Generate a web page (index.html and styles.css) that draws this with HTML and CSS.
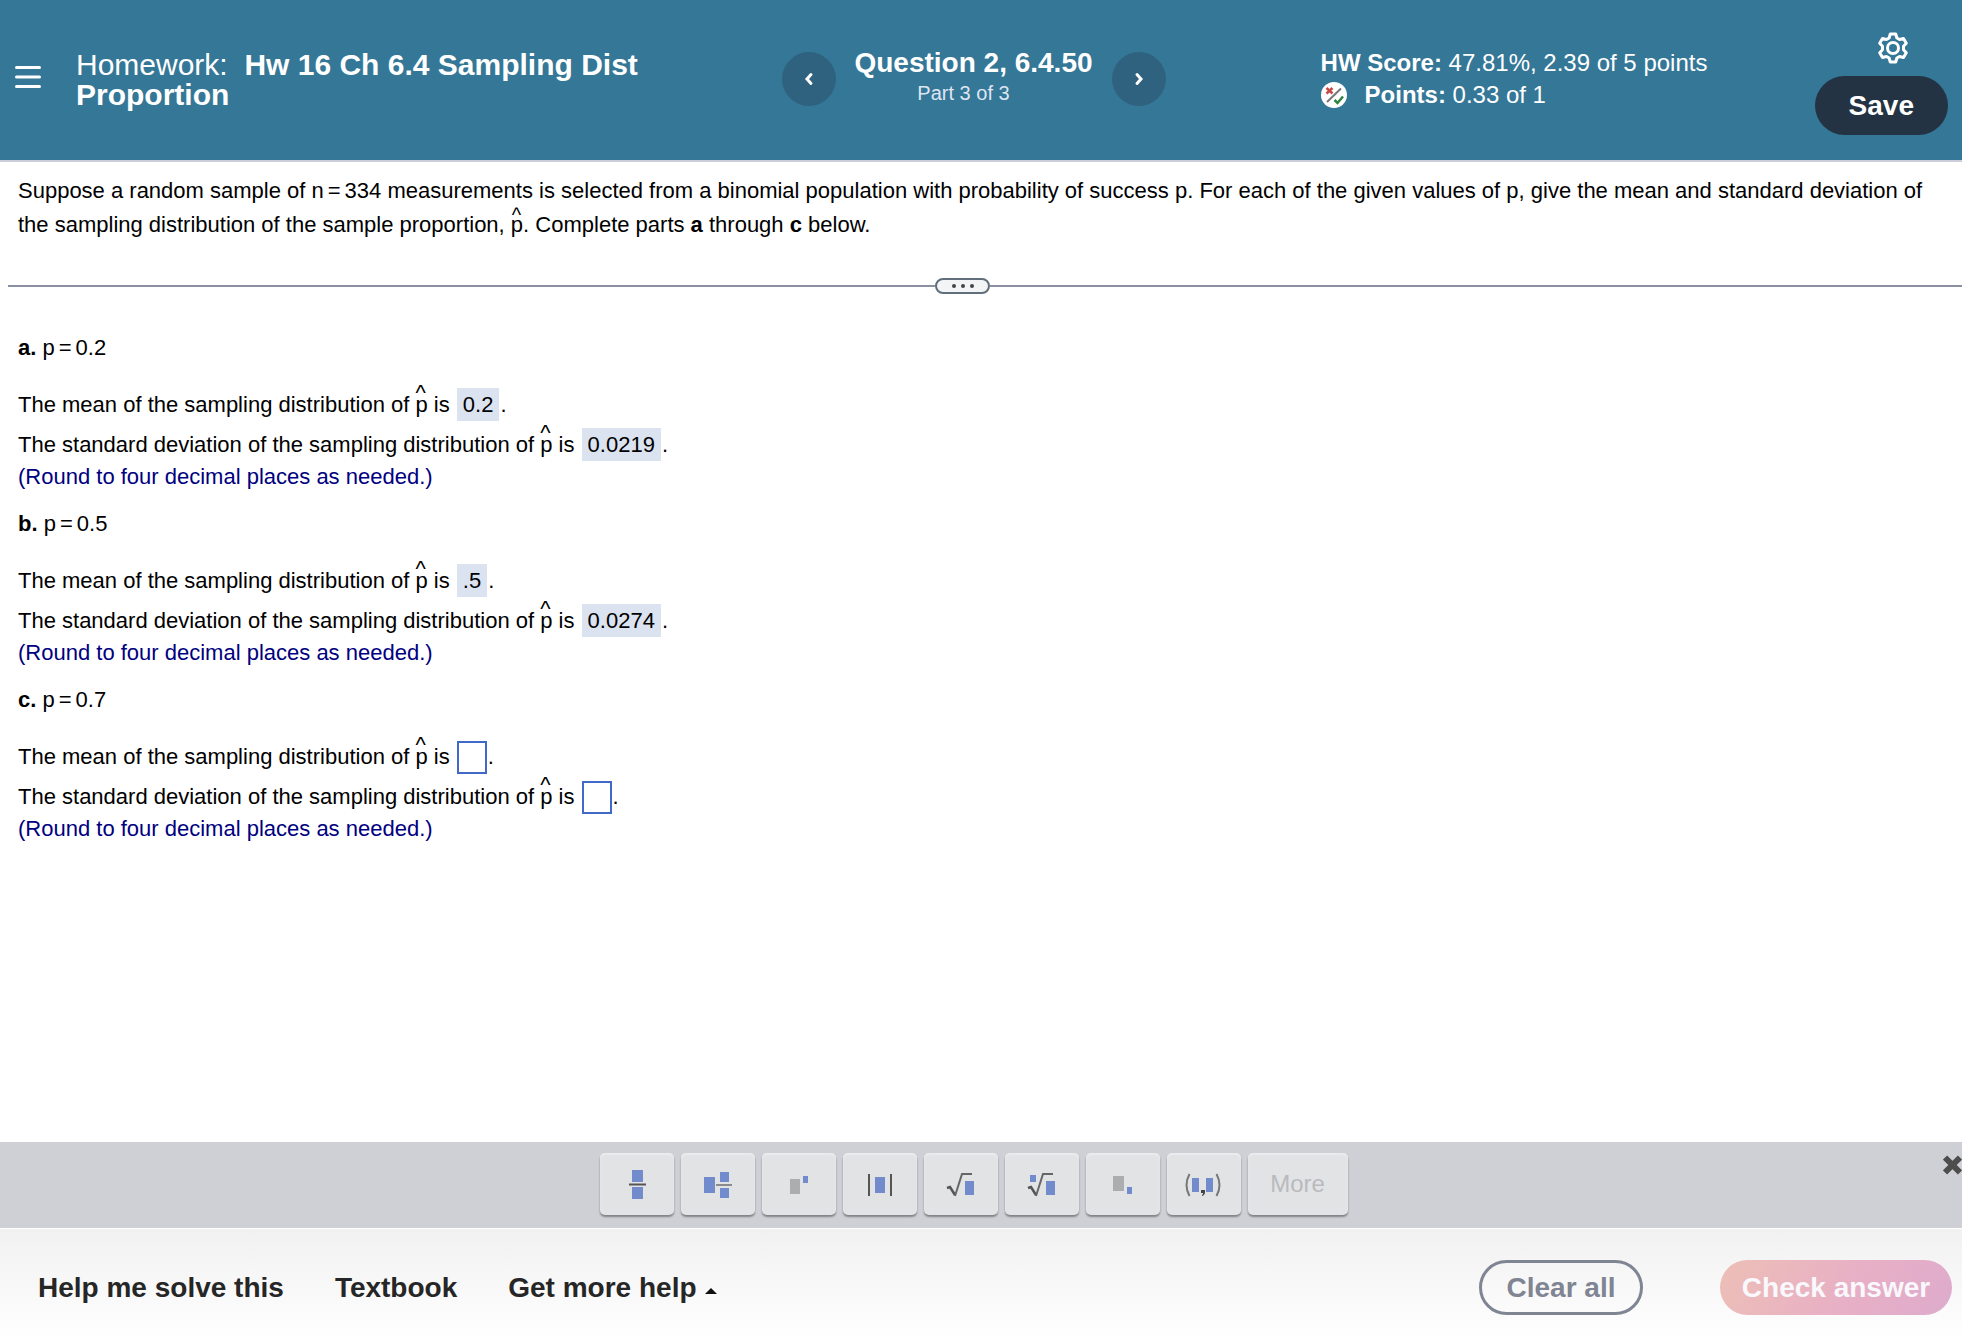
FILE: index.html
```html
<!DOCTYPE html>
<html lang="en">
<head>
<meta charset="utf-8">
<title>Homework: Hw 16 Ch 6.4 Sampling Dist Proportion</title>
<link rel="stylesheet" href="styles.css">
</head>
<body>
<header class="topbar">
  <div class="topbar-left">
    <button class="menu" aria-label="Menu">
      <svg width="26" height="24" viewBox="0 0 26 24"><path d="M1.500 2.500h23M1.500 12h23M1.500 21.500h23" stroke="#fff" stroke-width="3" stroke-linecap="round"/></svg>
    </button>
    <h1 class="title"><span class="title-kind">Homework:&nbsp;</span> Hw 16 Ch 6.4 Sampling Dist Proportion</h1>
  </div>
  <nav class="stepper" aria-label="Question">
    <button class="step" aria-label="Previous question">
      <svg width="10" height="14" viewBox="0 0 10 14"><path d="M7 2.500L3 7l4 4.500" fill="none" stroke="#fff" stroke-width="3" stroke-linecap="round"/></svg>
    </button>
    <div class="step-text">
      <h2 class="question">Question 2, 6.4.50</h2>
      <p class="part">Part 3 of 3</p>
    </div>
    <button class="step" aria-label="Next question">
      <svg width="10" height="14" viewBox="0 0 10 14"><path d="M3 2.500L7 7l-4 4.500" fill="none" stroke="#fff" stroke-width="3" stroke-linecap="round"/></svg>
    </button>
  </nav>
  <div class="topbar-right">
    <div class="scores">
      <p class="score"><b>HW Score:</b> 47.81%, 2.39 of 5 points</p>
      <p class="score points">
        <svg width="26" height="26" viewBox="0 0 26 26"><circle cx="13" cy="13" r="13" fill="#fff"/><path d="M6 20L20 6.500" stroke="#777" stroke-width="2"/><path d="M5.500 6l6 5.500M11.500 6l-6 5.500" stroke="#c94848" stroke-width="2.500"/><path d="M13.500 18l3 3 5.500-6.500" fill="none" stroke="#2e8540" stroke-width="2.500"/></svg>
        <span><b>Points:</b> 0.33 of 1</span>
      </p>
    </div>
    <div class="actions">
      <button class="gear" aria-label="Settings">
        <svg width="32" height="32" viewBox="0 0 32 32" fill="none" stroke="#fff" stroke-width="3" stroke-linejoin="round"><path d="M13.300 2h5.400l1.200 4 2.600 1.500 4-1 2.800 4.800-2.800 2.900v3.600l2.800 2.900-2.800 4.800-4-1-2.600 1.500-1.200 4h-5.400l-1.200-4-2.600-1.500-4 1-2.800-4.800 2.800-2.900v-3.600l-2.800-2.900 2.800-4.800 4 1 2.600-1.500z"/><circle cx="16" cy="16" r="5.500"/></svg>
      </button>
      <button class="save">Save</button>
    </div>
  </div>
</header>

<main class="content">
  <p class="intro">Suppose a random sample of n<span class="eq">=</span>334 measurements is selected from a binomial population with probability of success p. For each of the given values of p, give the mean and standard deviation of the sampling distribution of the sample proportion, <span class="hat low">p<span class="caret">^</span></span>. Complete parts <b>a</b> through <b>c</b> below.</p>

  <div class="divider">
    <button class="handle" aria-label="Resize the question"><i class="dot"></i><i class="dot"></i><i class="dot"></i></button>
  </div>

  <section class="item">
    <p class="given"><b>a.</b> p<span class="eq">=</span>0.2</p>
    <p class="row">The mean of the sampling distribution of <span class="hat">p<span class="caret">^</span></span> is <span class="answer">0.2</span>.</p>
    <p class="row">The standard deviation of the sampling distribution of <span class="hat">p<span class="caret">^</span></span> is <span class="answer">0.0219</span>.</p>
    <p class="hint">(Round to four decimal places as needed.)</p>
  </section>
  <section class="item">
    <p class="given"><b>b.</b> p<span class="eq">=</span>0.5</p>
    <p class="row">The mean of the sampling distribution of <span class="hat">p<span class="caret">^</span></span> is <span class="answer">.5</span>.</p>
    <p class="row">The standard deviation of the sampling distribution of <span class="hat">p<span class="caret">^</span></span> is <span class="answer">0.0274</span>.</p>
    <p class="hint">(Round to four decimal places as needed.)</p>
  </section>
  <section class="item">
    <p class="given"><b>c.</b> p<span class="eq">=</span>0.7</p>
    <p class="row"><label for="mean">The mean of the sampling distribution of <span class="hat">p<span class="caret">^</span></span> is</label> <input class="blank" id="mean" type="text">.</p>
    <p class="row"><label for="sd">The standard deviation of the sampling distribution of <span class="hat">p<span class="caret">^</span></span> is</label> <input class="blank" id="sd" type="text">.</p>
    <p class="hint">(Round to four decimal places as needed.)</p>
  </section>
</main>

<div class="palette">
  <div class="keys">
    <button class="key" aria-label="Fraction"><svg width="40" height="32" viewBox="0 0 40 32"><path d="M15 2h11v12H15zM15 19h11v12H15z" fill="#728bcc"/><path d="M12 16.500h17" stroke="#555" stroke-width="2"/></svg></button>
    <button class="key" aria-label="Mixed number"><svg width="40" height="32" viewBox="0 0 40 32"><path d="M6 9h11v16H6zM22 4h9v10h-9zM22 20h9v10h-9z" fill="#728bcc"/><path d="M18 17h16" stroke="#8b8b8d" stroke-width="2"/></svg></button>
    <button class="key" aria-label="Exponent"><svg width="40" height="32" viewBox="0 0 40 32"><path d="M11 11h10v15H11z" fill="#acadaf"/><path d="M24 8h5v7h-5z" fill="#728bcc"/></svg></button>
    <button class="key" aria-label="Absolute value"><svg width="40" height="32" viewBox="0 0 40 32"><path d="M15 9h10v16H15z" fill="#728bcc"/><path d="M9 6v22M31 6v22" stroke="#555" stroke-width="2"/></svg></button>
    <button class="key" aria-label="Square root"><svg width="40" height="32" viewBox="0 0 40 32"><path d="M24 13h9v14h-9z" fill="#728bcc"/><path d="M6 20l3-1 5 8" fill="none" stroke="#555" stroke-width="2.500"/><path d="M14 28l7-22h10" fill="none" stroke="#666" stroke-width="2"/></svg></button>
    <button class="key" aria-label="Nth root"><svg width="40" height="32" viewBox="0 0 40 32"><path d="M24 13h9v14h-9zM8 7h6v7H8z" fill="#728bcc"/><path d="M6 20l3-1 5 8" fill="none" stroke="#555" stroke-width="2.500"/><path d="M14 28l7-22h10" fill="none" stroke="#666" stroke-width="2"/></svg></button>
    <button class="key" aria-label="Subscript"><svg width="40" height="32" viewBox="0 0 40 32"><path d="M10 8h11v15H10z" fill="#acadaf"/><path d="M24 19h5v7h-5z" fill="#728bcc"/></svg></button>
    <button class="key" aria-label="Ordered pair"><svg width="40" height="32" viewBox="0 0 40 32"><path d="M8 10h7v14H8zM22 10h7v14h-7z" fill="#728bcc"/><path d="M5.500 6q-6 11 0 22M32.500 6q6 11 0 22" fill="none" stroke="#777" stroke-width="2"/><path d="M17 22h4v2q0 3-3 4v-1q1.500-1 1-2h-2z" fill="#444"/></svg></button>
    <button class="key more" disabled>More</button>
  </div>
  <button class="close" aria-label="Close"><svg width="19" height="20" viewBox="0 0 19 20"><path d="M2 2.500l15 15M17 2.500l-15 15" stroke="#4d4d4d" stroke-width="6"/></svg></button>
</div>

<footer class="footer">
  <nav class="links" aria-label="Help">
    <a href="#solve">Help me solve this</a>
    <a href="#textbook">Textbook</a>
    <a href="#more">Get more help <svg width="12" height="6" viewBox="0 0 12 6"><path d="M6 0l6 6H0z" fill="#111"/></svg></a>
  </nav>
  <div class="submit">
    <button class="pill clear">Clear all</button>
    <button class="pill check">Check answer</button>
  </div>
</footer>
</body>
</html>
```
FILE: styles.css
```css
* { box-sizing: border-box; }

body {
  margin: 0;
  min-height: 100vh;
  display: flex;
  flex-direction: column;
  font-family: "Liberation Sans", Arial, sans-serif;
  font-size: 22px;
  color: #000;
  background: #fff;
}

h1, h2, p { margin: 0; }

button {
  padding: 0;
  border: 0;
  background: none;
  font: inherit;
  cursor: pointer;
}

svg { display: block; flex: none; }

.topbar {
  display: grid;
  grid-template-columns: minmax(0, 1fr) auto minmax(0, 1fr);
  min-height: 162px;
  padding-right: 14px;
  background: #347797;
  border-bottom: 2px solid #cccedb;
  color: #fff;
}

.topbar-left {
  display: flex;
  align-items: flex-start;
  gap: 35px;
  padding: 50px 0 0 15px;
}

.menu { margin-top: 15px; }

.title {
  font-size: 30px;
  line-height: 30px;
}

.title-kind { font-weight: 400; }

.stepper {
  display: flex;
  align-items: flex-start;
  padding-top: 46px;
}

.step {
  display: flex;
  align-items: center;
  justify-content: center;
  width: 54px;
  height: 54px;
  margin-top: 6px;
  border-radius: 50%;
  background: #2f627e;
}

.step-text {
  padding: 0 19px 0 18px;
  text-align: center;
}

.question {
  font-size: 28px;
  line-height: 34px;
}

.part {
  padding-right: 20px;
  font-size: 20px;
  line-height: 26px;
  color: #dfe5f3;
}

.topbar-right {
  display: flex;
  justify-content: space-between;
  padding-left: 155px;
}

.scores { padding-top: 47px; }

.score {
  font-size: 24px;
  line-height: 32px;
  white-space: nowrap;
}

.points {
  display: flex;
  align-items: center;
  gap: 18px;
}

.actions {
  display: flex;
  flex-direction: column;
  align-items: center;
  gap: 12px;
  padding-top: 32px;
}

.gear { margin-left: 24px; }

.save {
  height: 59px;
  padding: 0 34px;
  border-radius: 30px;
  background: #233343;
  color: #fff;
  font-size: 28px;
  font-weight: 700;
}

.content { flex: 1; }

.intro {
  padding: 12px 18px 36px;
  line-height: 34px;
}

.eq { margin: 0 4px; }

.hat { position: relative; }

.caret {
  position: absolute;
  left: 0;
  top: -10px;
  font-size: 22px;
  line-height: 22px;
}

.low .caret {
  top: -8px;
  left: 1px;
  font-size: 20px;
}

.divider {
  display: flex;
  align-items: center;
  margin: 0 0 37px 8px;
}

.divider::before,
.divider::after {
  content: "";
  flex: 1 1 0;
  height: 2px;
  background: #8a8fa1;
}

.divider::after { flex-basis: 45px; }

.handle {
  display: flex;
  align-items: center;
  justify-content: center;
  gap: 5px;
  width: 55px;
  height: 16px;
  border: 2px solid #616e7c;
  border-radius: 8px;
  background: #f2f4f6;
}

.dot {
  width: 4px;
  height: 4px;
  border-radius: 50%;
  background: #444;
}

.item { padding: 0 18px 18px; }

.given {
  margin-bottom: 20px;
  line-height: 34px;
}

.row { line-height: 40px; }

.answer,
.blank {
  display: inline-block;
  height: 33px;
  margin: 0 1px;
  line-height: 33px;
}

.answer {
  padding: 0 6px;
  background: #dbe2f0;
}

.blank {
  width: 30px;
  padding: 0 4px;
  border: 2px solid #4169c8;
  background: #fff;
  font: inherit;
}

.hint {
  line-height: 24px;
  color: #000080;
}

.palette {
  display: grid;
  grid-template-columns: 1fr auto 1fr;
  padding: 11px 0 13px;
  background: #cfd0d6;
  border-bottom: 1px solid #fff;
}

.keys {
  grid-column: 2;
  display: flex;
  gap: 7px;
  margin-right: 15px;
}

.key {
  display: flex;
  align-items: center;
  justify-content: center;
  width: 74px;
  height: 62px;
  border-radius: 5px;
  background: #e2e3e5;
  box-shadow: 0 2px 2px #808285, inset 0 2px 2px #ebecee;
}

.more {
  width: 100px;
  font-size: 24px;
  color: #b9babd;
}

.close {
  justify-self: end;
  align-self: start;
  margin-top: 2px;
}

.footer {
  display: flex;
  align-items: center;
  justify-content: space-between;
  height: 113px;
  padding: 4px 10px 0 38px;
  background: linear-gradient(#f1f1f1, #fff);
  font-size: 28px;
  font-weight: 700;
}

.links {
  display: flex;
  gap: 51px;
}

.links a {
  display: flex;
  align-items: center;
  gap: 8px;
  color: #262626;
  text-decoration: none;
}

.links svg { margin-top: 6px; }

.submit {
  display: flex;
  gap: 77px;
}

.pill {
  height: 55px;
  border-radius: 28px;
}

.clear {
  width: 164px;
  border: 3px solid #808593;
  color: #808593;
}

.check {
  width: 232px;
  background: linear-gradient(120deg, #edbfb6, #e8b0c5 55%, #deabcd);
  color: #f9f8fc;
}
```
